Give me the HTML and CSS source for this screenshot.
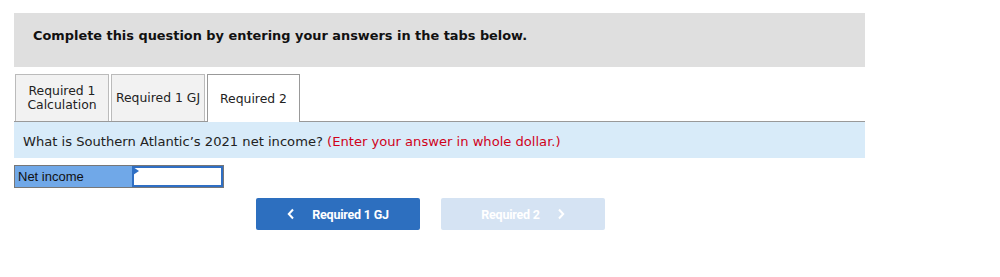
FILE: index.html
```html
<!DOCTYPE html>
<html lang="en">
<head>
    <meta charset="UTF-8">
    <title>Required 2</title>
    <link rel="stylesheet" href="styles.css">
</head>
<body>
    <div class="container">
        <div class="instructions">Complete this question by entering your answers in the tabs below.</div>

        <div class="tabs">
            <div class="tab">Required 1<br>Calculation</div>
            <div class="tab">Required 1 GJ</div>
            <div class="tab active">Required 2</div>
        </div>

        <div class="question">
            What is Southern Atlantic’s 2021 net income? <span class="hint">(Enter your answer in whole dollar.)</span>
        </div>

        <div class="answer-row">
            <div class="answer-label">Net income</div>
            <div class="answer-cell">
                <span class="marker"></span>
                <input type="text" class="answer-input">
            </div>
        </div>

        <div class="nav">
            <button class="nav-btn">
                <svg width="8" height="12" viewBox="0 0 8 12"><path d="M6 1.5 L1.8 6 L6 10.5" fill="none" stroke="#fff" stroke-width="2"/></svg>
                <span>Required 1 GJ</span>
            </button>
            <button class="nav-btn disabled">
                <span>Required 2</span>
                <svg width="8" height="12" viewBox="0 0 8 12"><path d="M2 1.5 L6.2 6 L2 10.5" fill="none" stroke="#fff" stroke-width="2"/></svg>
            </button>
        </div>
    </div>
</body>
</html>
```

FILE: styles.css
```css
* {
    box-sizing: border-box;
    margin: 0;
    padding: 0;
}

body {
    font-family: "DejaVu Sans", Verdana, sans-serif;
    background: #fff;
    color: #222;
}

.container {
    width: 865px;
    padding: 13px 0 0 14px;
}

.instructions {
    height: 54px;
    background: #dfdfdf;
    padding: 15px 0 0 19px;
    font-size: 12.9px;
    font-weight: bold;
    color: #111;
}

.tabs {
    display: flex;
    gap: 2px;
    margin-top: 7px;
    padding-left: 1px;
    border-bottom: 1px solid #999;
}

.tab {
    width: 94px;
    height: 47px;
    background: #f2f2f2;
    border: 1px solid #bbb;
    border-bottom: none;
    display: flex;
    align-items: center;
    justify-content: center;
    text-align: center;
    font-size: 12.4px;
    line-height: 14px;
    color: #222;
}

.tab.active {
    width: 93px;
    background: #fff;
    border-color: #999;
    margin-bottom: -1px;
    height: 48px;
}

.question {
    height: 36px;
    background: #d8ebf9;
    padding: 12px 0 0 9px;
    font-size: 13.1px;
    color: #222;
}

.hint {
    color: #d0021b;
}

.answer-row {
    display: flex;
    margin-top: 7px;
    height: 23px;
}

.answer-label {
    width: 118px;
    background: #70a8e8;
    border: 1px solid #777;
    border-right: none;
    padding: 3px 0 0 3px;
    font-family: "Liberation Sans", Arial, sans-serif;
    font-size: 13px;
    color: #111;
}

.answer-cell {
    position: relative;
    width: 92px;
    border: 1px solid #777;
    border-left: none;
}

.answer-input {
    width: 100%;
    height: 100%;
    border: 2px solid #2f6fc4;
    outline: none;
}

.marker {
    position: absolute;
    top: 1px;
    left: 1px;
    width: 0;
    height: 0;
    border-top: 4px solid transparent;
    border-bottom: 4px solid transparent;
    border-left: 6px solid #2f6fc4;
}

.nav {
    display: flex;
    gap: 21px;
    margin-top: 10px;
    padding-left: 242px;
}

.nav-btn {
    width: 164px;
    height: 32px;
    background: #2d6fbf;
    border: none;
    border-radius: 2px;
    color: #fff;
    font-family: Roboto, "Liberation Sans", sans-serif;
    font-weight: bold;
    font-size: 12.5px;
    letter-spacing: -0.2px;
    display: flex;
    align-items: center;
    justify-content: center;
    gap: 17px;
}

.nav-btn.disabled {
    background: #d5e3f3;
}
```
